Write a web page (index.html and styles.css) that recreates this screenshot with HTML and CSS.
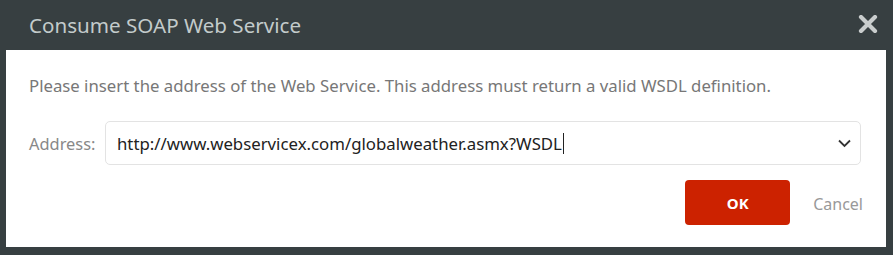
FILE: index.html
```html
<!DOCTYPE html>
<html>
<head>
<meta charset="utf-8">
<link rel="stylesheet" href="styles.css">
</head>
<body>
<div class="dialog">
  <div class="header">
    <span class="title">Consume SOAP Web Service</span>
    <span class="close">
      <svg width="20" height="18" viewBox="0 0 20 18"><path d="M3 2 L17 16 M17 2 L3 16" stroke="#c9cdcd" stroke-width="4.2" stroke-linecap="round"/></svg>
    </span>
  </div>
  <div class="body">
    <p class="desc">Please insert the address of the Web Service. This address must return a valid WSDL definition.</p>
    <div class="row">
      <label class="label">Address:</label>
      <div class="input">
        <span class="value">http://www.webservicex.com/globalweather.asmx?WSDL</span><span class="caret"></span>
        <svg class="chev" width="13" height="9" viewBox="0 0 13 9"><path d="M1 1.5 L6.5 7 L12 1.5" fill="none" stroke="#333" stroke-width="1.8"/></svg>
      </div>
    </div>
    <div class="actions">
      <button class="ok">OK</button>
      <span class="cancel">Cancel</span>
    </div>
  </div>
</div>
</body>
</html>
```
FILE: styles.css
```css
html, body {
  margin: 0;
  padding: 0;
  background: #373f41;
  width: 893px;
  height: 255px;
  overflow: hidden;
}
.dialog {
  font-family: "Noto Sans", sans-serif;
  padding: 0 7px 8px 6px;
}
.header {
  height: 50px;
  display: flex;
  align-items: center;
  justify-content: space-between;
  padding-left: 23px;
  padding-right: 8px;
  box-sizing: border-box;
}
.title {
  color: #c3cbcb;
  font-size: 20.6px;
  margin-top: -1px;
}
.close {
  display: flex;
  margin-top: -3px;
}
.body {
  background: #fff;
  height: 197px;
  box-sizing: border-box;
  padding: 24px 25px 0 23px;
}
.desc {
  margin: 0;
  font-size: 16.75px;
  color: #777;
  line-height: 24px;
}
.row {
  display: flex;
  align-items: center;
  margin-top: 23px;
}
.label {
  font-size: 16.4px;
  color: #888;
  width: 76px;
}
.input {
  flex: 1;
  height: 44px;
  box-sizing: border-box;
  border: 1.5px solid #e3e3e3;
  border-radius: 5px;
  display: flex;
  align-items: center;
  padding: 0 9px 0 11px;
}
.value {
  font-size: 16.8px;
  color: #222;
}
.caret {
  width: 1px;
  height: 21px;
  background: #222;
  margin-left: 1px;
}
.chev {
  margin-left: auto;
}
.actions {
  display: flex;
  justify-content: flex-end;
  align-items: center;
  margin-top: 15px;
}
.ok {
  width: 105px;
  height: 45px;
  background: #cc2200;
  border: none;
  border-radius: 4px;
  color: #fff;
  font-family: "Noto Sans", sans-serif;
  font-weight: bold;
  font-size: 15px;
}
.cancel {
  font-size: 16px;
  color: #999;
  margin-left: 23px;
  margin-right: -2px;
  margin-top: 2px;
}
```
